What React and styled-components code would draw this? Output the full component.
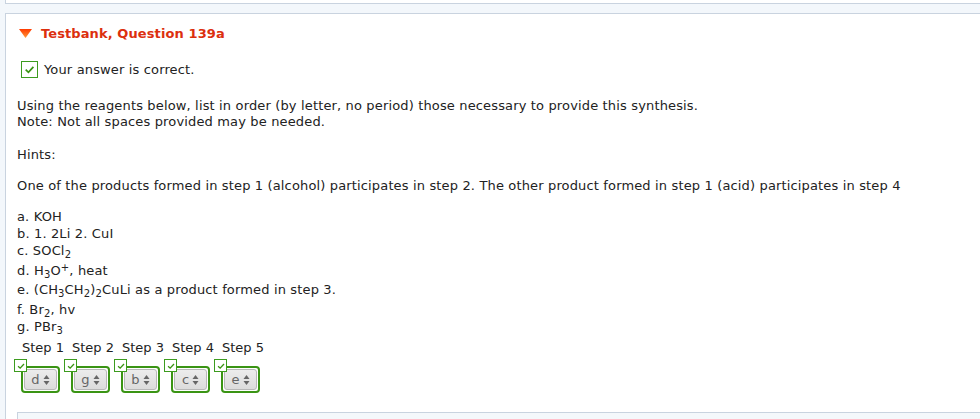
import React from "react";
import styled, { createGlobalStyle } from "styled-components";

const Global = createGlobalStyle`
  html, body { margin: 0; padding: 0; }
  body {
    background: #f3f7fb;
    font-family: "DejaVu Sans", sans-serif;
    font-size: 13px;
    letter-spacing: 0.15px;
    color: #222;
    overflow: hidden;
  }
`;

const Page = styled.div`
  width: 980px;
  height: 419px;
  overflow: hidden;
  padding-left: 5px;
  box-sizing: border-box;
`;

const PrevBox = styled.div`
  height: 3px;
  background: #fff;
  border-left: 1px solid #c9d3df;
  border-bottom: 1px solid #c9d3df;
  width: 1000px;
`;

const Card = styled.div`
  margin-top: 9px;
  width: 1000px;
  background: #fff;
  border-top: 1px solid #c9d3df;
  border-left: 1px solid #c9d3df;
  padding: 11px 0 0 11px;
  box-sizing: border-box;
  height: 420px;
`;

const TitleRow = styled.div`
  display: flex;
  align-items: center;
  gap: 9px;
  height: 16px;
  padding-left: 2px;
`;

const Title = styled.h2`
  margin: 0;
  font-size: 13px;
  font-weight: bold;
  letter-spacing: 0.1px;
  color: #dc2f0e;
  font-family: "DejaVu Sans", sans-serif;
`;

const Status = styled.div`
  display: flex;
  align-items: center;
  gap: 6px;
  margin-top: 20px;
  padding-left: 4px;
  line-height: 17px;
`;

const CheckBox = styled.span`
  display: inline-flex;
  align-items: center;
  justify-content: center;
  width: ${(p) => p.size}px;
  height: ${(p) => p.size}px;
  box-sizing: border-box;
  border: 1px solid #3c9b1e;
  background: #fff;
`;

const Para = styled.p`
  margin: ${(p) => p.mt}px 0 0 0;
  line-height: 16px;
`;

const List = styled.div`
  margin-top: 14px;
`;

const Item = styled.div`
  height: ${(p) => p.h || 17}px;
  line-height: 17px;
  sub { font-size: 10px; vertical-align: -3px; line-height: 0; }
  sup { font-size: 10px; vertical-align: 4px; line-height: 0; }
`;

const Steps = styled.div`
  display: grid;
  grid-template-columns: repeat(5, 50px);
  margin-top: 4px;
  padding-left: 5px;
`;

const StepLabel = styled.div`
  letter-spacing: 0;
  line-height: 16px;
`;

const Slot = styled.div`
  position: relative;
  margin-top: 3px;
  padding-top: 7px;
  padding-left: 7px;
  margin-left: -8px;
`;

const Badge = styled(CheckBox)`
  position: absolute;
  left: 0;
  top: 0;
`;

const Select = styled.div`
  width: 39px;
  height: 27px;
  box-sizing: border-box;
  border: 2px solid #3a9414;
  border-radius: 4px;
  padding: 1px;
  background: #fff;
`;

const SelectInner = styled.div`
  height: 100%;
  box-sizing: border-box;
  border: 1px solid #b8b8b8;
  border-radius: 3px;
  background: linear-gradient(#ececec, #dcdcdc);
  display: flex;
  align-items: center;
  justify-content: center;
  gap: 3px;
  color: #666;
  letter-spacing: 0;
`;

const Solution = styled.div`
  margin-top: 19px;
  width: 990px;
  height: 20px;
  background: #f4f8fb;
  border-top: 1px solid #c9d3df;
  border-left: 1px solid #c9d3df;
`;

const Tick = ({ s = 11 }) => (
  <svg width={s} height={s} viewBox="0 0 12 12">
    <path d="M2.5 6.2 L5 8.6 L9.6 3.6" fill="none" stroke="#3a9414" strokeWidth="1.6" />
  </svg>
);

const Arrows = () => (
  <svg width="7" height="12" viewBox="0 0 7 12">
    <path d="M3.5 1 L6.5 5 L0.5 5 Z" fill="#666" />
    <path d="M0.5 7 L6.5 7 L3.5 11 Z" fill="#666" />
  </svg>
);

const answers = ["d", "g", "b", "c", "e"];

export default function App() {
  return (
    <Page>
      <Global />
      <PrevBox />
      <Card>
        <TitleRow>
          <svg width="13" height="9" viewBox="0 0 13 9">
            <defs>
              <linearGradient id="tg" x1="0" y1="0" x2="0" y2="1">
                <stop offset="0" stopColor="#ff3a00" />
                <stop offset="1" stopColor="#ff9a3a" />
              </linearGradient>
            </defs>
            <path d="M0 0 L13 0 L6.5 9 Z" fill="url(#tg)" />
          </svg>
          <Title>Testbank, Question 139a</Title>
        </TitleRow>
        <Status>
          <CheckBox size={17}>
            <Tick s={13} />
          </CheckBox>
          <span>Your answer is correct.</span>
        </Status>
        <Para mt={20}>
          Using the reagents below, list in order (by letter, no period) those necessary to provide this synthesis.
          <br />
          Note: Not all spaces provided may be needed.
        </Para>
        <Para mt={17}>Hints:</Para>
        <Para mt={15}>
          One of the products formed in step 1 (alcohol) participates in step 2. The other product formed in step 1 (acid) participates in step 4
        </Para>
        <List>
          <Item>a. KOH</Item>
          <Item>b. 1. 2Li 2. CuI</Item>
          <Item h={20}>c. SOCl<sub>2</sub></Item>
          <Item h={19}>d. H<sub>3</sub>O<sup>+</sup>, heat</Item>
          <Item h={20}>e. (CH<sub>3</sub>CH<sub>2</sub>)<sub>2</sub>CuLi as a product formed in step 3.</Item>
          <Item h={17}>f. Br<sub>2</sub>, hv</Item>
          <Item h={18}>g. PBr<sub>3</sub></Item>
        </List>
        <Steps>
          {answers.map((a, i) => (
            <StepLabel key={"l" + i}>Step {i + 1}</StepLabel>
          ))}
          {answers.map((a, i) => (
            <Slot key={"s" + i}>
              <Badge size={13}>
                <Tick s={10} />
              </Badge>
              <Select>
                <SelectInner>
                  <span>{a}</span>
                  <Arrows />
                </SelectInner>
              </Select>
            </Slot>
          ))}
        </Steps>
        <Solution />
      </Card>
    </Page>
  );
}
